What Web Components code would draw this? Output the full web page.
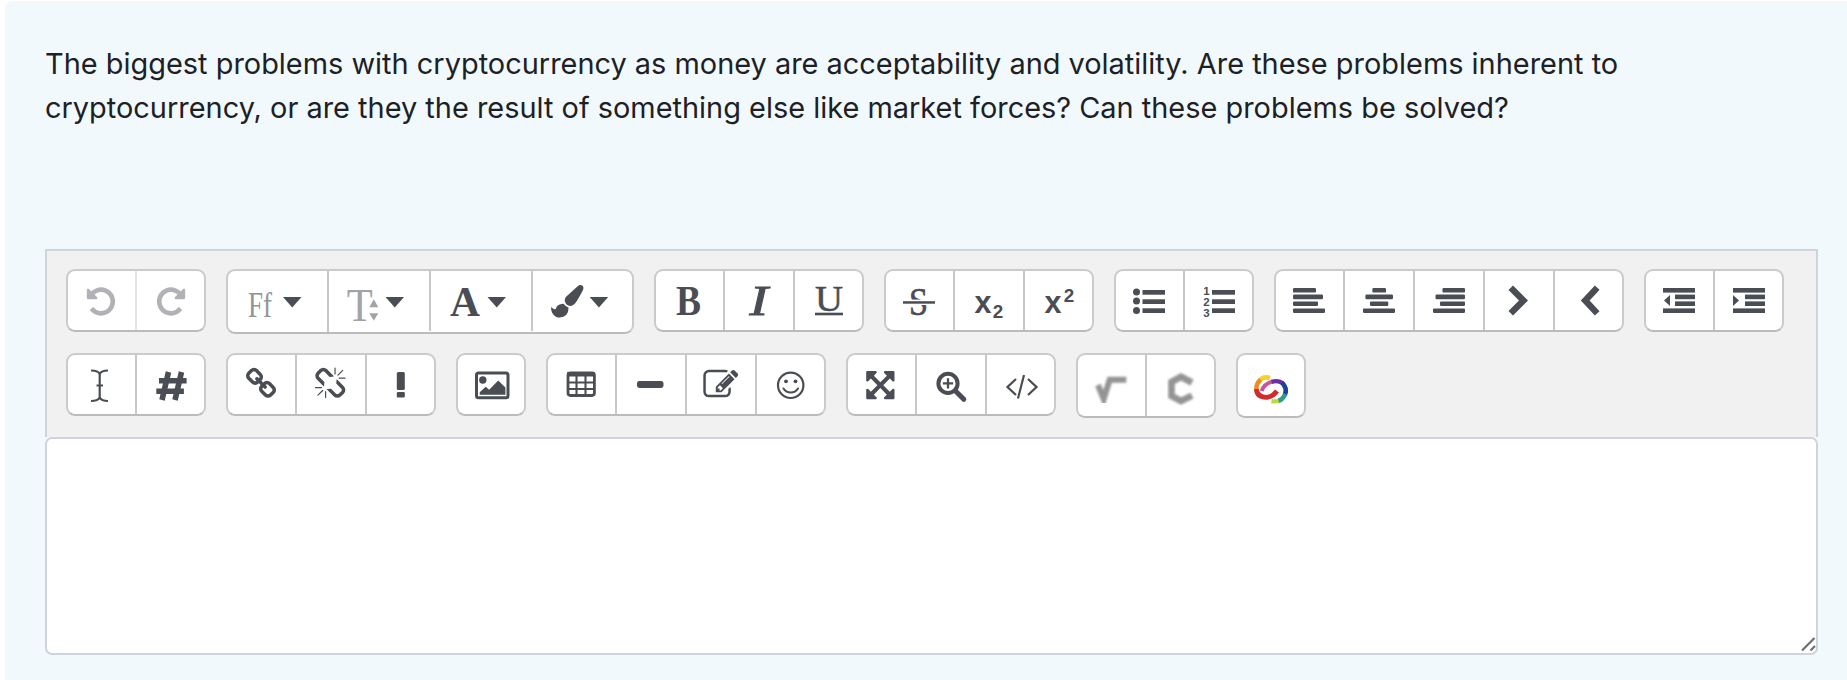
<!DOCTYPE html>
<html>
  <head>
    <meta charset="UTF-8" />
    <title>Question</title>
    <style>
      html, body { margin: 0; background: #fff; }
    </style>
  </head>

  <body>
    <question-panel>
      The biggest problems with cryptocurrency as money are acceptability and volatility. Are these problems inherent to
      cryptocurrency, or are they the result of something else like market forces? Can these problems be solved?
      <atto-editor slot="editor">
        <atto-group><atto-btn icon="undo"></atto-btn><atto-btn icon="redo"></atto-btn></atto-group>
        <atto-group wide><atto-btn icon="font" wide></atto-btn><atto-btn icon="size" wide></atto-btn><atto-btn icon="color" wide></atto-btn><atto-btn icon="brush" wide></atto-btn></atto-group>
        <atto-group><atto-btn icon="bold"></atto-btn><atto-btn icon="italic"></atto-btn><atto-btn icon="underline"></atto-btn></atto-group>
        <atto-group><atto-btn icon="strike"></atto-btn><atto-btn icon="sub"></atto-btn><atto-btn icon="sup"></atto-btn></atto-group>
        <atto-group><atto-btn icon="ul"></atto-btn><atto-btn icon="ol"></atto-btn></atto-group>
        <atto-group><atto-btn icon="alignl"></atto-btn><atto-btn icon="alignc"></atto-btn><atto-btn icon="alignr"></atto-btn><atto-btn icon="chevr"></atto-btn><atto-btn icon="chevl"></atto-btn></atto-group>
        <atto-group><atto-btn icon="outdent"></atto-btn><atto-btn icon="indent"></atto-btn></atto-group>

        <atto-group><atto-btn icon="cursor"></atto-btn><atto-btn icon="hash"></atto-btn></atto-group>
        <atto-group><atto-btn icon="link"></atto-btn><atto-btn icon="unlink"></atto-btn><atto-btn icon="excl"></atto-btn></atto-group>
        <atto-group><atto-btn icon="image"></atto-btn></atto-group>
        <atto-group><atto-btn icon="table"></atto-btn><atto-btn icon="minus"></atto-btn><atto-btn icon="edit"></atto-btn><atto-btn icon="smile"></atto-btn></atto-group>
        <atto-group><atto-btn icon="expand"></atto-btn><atto-btn icon="zoom"></atto-btn><atto-btn icon="code"></atto-btn></atto-group>
        <atto-group tall><atto-btn icon="sqrt"></atto-btn><atto-btn icon="chem"></atto-btn></atto-group>
        <atto-group tall><atto-btn icon="logo"></atto-btn></atto-group>
      </atto-editor>
    </question-panel>

    <script>
      const DARK = "#4a4e54";
      const GREY = "#a2a3a5";
      const SERIF = "'Liberation Serif', serif";
      const SANS = "'Liberation Sans', sans-serif";
      const ROW1 = 271;
      const ROW2 = 355;

      // font awesome style paths, 1792 grid
      const P = {
        undo: "M1664 896q0 156-61 298t-164 245-245 164-298 61q-172 0-327-72.5t-264-204.5q-7-10-6.5-22.5t8.5-20.5l137-138q10-9 25-9 16 2 23 12 73 95 179 147t225 52q104 0 198.5-40.5t163.5-109.5 109.5-163.5 40.5-198.5-40.5-198.5-109.5-163.5-163.5-109.5-198.5-40.5q-98 0-188 35.5t-160 101.5l137 138q31 30 14 69-17 40-59 40h-448q-26 0-45-19t-19-45v-448q0-42 40-59 39-17 69 14l130 129q107-101 244.5-156.5t284.5-55.5q156 0 298 61t245 164 164 245 61 298z",
        link: "M1520 1216q0-40-28-68l-208-208q-28-28-68-28-42 0-72 32 3 3 19 18.5t21.5 21.5 15 19 13 25.5 3.5 27.5q0 40-28 68t-68 28q-15 0-27.5-3.5t-25.5-13-19-15-21.5-21.5-18.5-19q-33 31-33 73 0 40 28 68l206 207q27 27 68 27 40 0 68-26l147-146q28-28 28-67zm-703-705q0-40-28-68l-206-207q-28-28-68-28-39 0-68 27l-147 146q-28 28-28 67 0 40 28 68l208 208q27 27 68 27 42 0 72-31-3-3-19-18.5t-21.5-21.5-15-19-13-25.5-3.5-27.5q0-40 28-68t68-28q15 0 27.5 3.5t25.5 13 19 15 21.5 21.5 18.5 19q33-31 33-73zm895 705q0 120-85 203l-147 146q-83 83-203 83-121 0-204-85l-206-207q-83-83-83-203 0-123 88-209l-88-88q-86 88-208 88-120 0-204-84l-208-208q-84-84-84-204t85-203l147-146q83-83 203-83 121 0 204 85l206 207q83 83 83 203 0 123-88 209l88 88q86-88 208-88 120 0 204 84l208 208q84 84 84 204z",
        unlink: "M439 1271l-256 256q-11 9-23 9t-23-9q-9-10-9-23t9-23l256-256q10-9 23-9t23 9q9 10 9 23t-9 23zm169 41v320q0 14-9 23t-23 9-23-9-9-23v-320q0-14 9-23t23-9 23 9 9 23zm-224-224q0 14-9 23t-23 9h-320q-14 0-23-9t-9-23 9-23 23-9h320q14 0 23 9t9 23zm1264 128q0 120-85 203l-147 146q-83 83-203 83-121 0-204-85l-334-335q-21-21-42-56l239-18 273 274q27 27 68 27.5t68-26.5l147-146q28-28 28-67 0-40-28-68l-274-275 18-239q35 21 56 42l336 336q84 86 84 204zm-617-724l-239 18-273-274q-28-28-68-28-39 0-68 27l-147 146q-28 28-28 67 0 40 28 68l274 274-18 240q-35-21-56-42l-336-336q-84-86-84-204 0-120 85-203l147-146q83-83 203-83 121 0 204 85l334 335q21 21 42 56zm633 84q0 14-9 23t-23 9h-320q-14 0-23-9t-9-23 9-23 23-9h320q14 0 23 9t9 23zm-544-544v320q0 14-9 23t-23 9-23-9-9-23v-320q0-14 9-23t23-9 23 9 9 23zm407 151l-256 256q-11 9-23 9t-23-9q-9-10-9-23t9-23l256-256q10-9 23-9t23 9q9 10 9 23t-9 23z",
        brush: "M1615 0q70 0 122.5 46.5t52.5 116.5q0 63-45 151-332 629-465 752-97 91-218 91-126 0-216.5-92.5t-90.5-219.5q0-128 92-212l638-579q59-54 130-54zm-909 1034q39 76 106.5 130t150.5 76l1 71q4 213-129.5 347t-348.5 134q-123 0-218-46.5t-152.5-127.5-86.5-183-29-220q7 5 41 30t62 44.5 59 36.5 46 17q41 0 55-37 25-66 57.5-112.5t69.5-76 88-47.5 103-25.5 125-10.5z",
        edit: "M888 1184l116-116-152-152-116 116v56h96v96h56zm440-720q-16-16-33 1l-350 350q-17 17-1 33t33-1l350-350q17-17 1-33zm80 594v190q0 119-84.5 203.5t-203.5 84.5h-832q-119 0-203.5-84.5t-84.5-203.5v-832q0-119 84.5-203.5t203.5-84.5h832q63 0 117 25 15 7 18 23 3 17-9 29l-49 49q-14 14-32 8-23-6-45-6h-832q-66 0-113 47t-47 113v832q0 66 47 113t113 47h832q66 0 113-47t47-113v-126q0-13 9-22l64-64q15-15 35-7t20 29zm-96-738l288 288-672 672h-288v-288zm444 132l-92 92-288-288 92-92q28-28 68-28t68 28l152 152q28 28 28 68t-28 68z",
        expand: "M1283 413l-355 355 355 355 144-144q29-31 70-14 39 17 39 59v448q0 26-19 45t-45 19h-448q-42 0-59-40-17-39 14-69l144-144-355-355-355 355 144 144q31 30 14 69-17 40-59 40h-448q-26 0-45-19t-19-45v-448q0-42 40-59 39-17 69 14l144 144 355-355-355-355-144 144q-19 19-45 19-12 0-24-5-40-17-40-59v-448q0-26 19-45t45-19h448q42 0 59 40 17 39-14 69l-144 144 355 355 355-355-144-144q-31-30-14-69 17-40 59-40h448q26 0 45 19t19 45v448q0 42-39 59-13 5-25 5-26 0-45-19z",
      };

      const fa = (x, y, s, d, fill, flip) =>
        `<svg x="${x}" y="${y}" width="${s}" height="${s}" viewBox="0 0 1792 1792"><path fill="${fill}" ${flip ? 'transform="translate(1792,0) scale(-1,1)"' : ""} d="${d}"/></svg>`;
      const caret = (x) => `<path fill="${DARK}" d="M${x} 297h18.5l-9.25 10.5z"/>`;
      const txt = (x, y, size, s, o = {}) =>
        `<text x="${x}" y="${y}" font-size="${size}" font-family="${o.family || SERIF}" font-weight="${o.weight || 400}" font-style="${o.style || "normal"}" fill="${o.fill || DARK}" ${o.stroke ? `stroke="${o.fill || DARK}" stroke-width="${o.stroke}"` : ""} ${o.len ? `textLength="${o.len}" lengthAdjust="spacingAndGlyphs"` : ""}>${s}</text>`;
      const bar = (x, y, w, h = 4.6, r = 1.2) => `<rect x="${x}" y="${y}" width="${w}" height="${h}" rx="${r}" fill="${DARK}"/>`;
      const line = (d, w, c = DARK, cap = "butt") => `<path fill="none" stroke="${c}" stroke-width="${w}" stroke-linecap="${cap}" stroke-linejoin="miter" d="${d}"/>`;
      const rows = [288, 294.6, 301.4, 308.4];

      const ICONS = {
        undo: [68, ROW1, fa(84.5, 285, 33, P.undo, "#b1b2b6")],
        redo: [137, ROW1, fa(154.5, 285, 33, P.undo, "#b1b2b6", true)],
        font: [228, ROW1, txt(248, 316.7, 36, "Ff", { fill: "#939496", len: 24 }) + caret(283)],
        size: [329, ROW1, txt(346.7, 321, 46, "T", { fill: GREY, len: 26 }) + `<path fill="${GREY}" d="M373.8 299.3l4.5 8h-9zM369.3 313.3h9l-4.5 7.5z"/>` + caret(385.5)],
        color: [431, ROW1, txt(450, 315.7, 42, "A", { weight: 700, len: 30 }) + caret(487.5)],
        brush: [533, ROW1, fa(551, 285, 32.5, P.brush, DARK) + caret(589.7)],
        bold: [656, ROW1, txt(676, 315, 42, "B", { weight: 700, len: 25 })],
        italic: [725, ROW1, txt(749.5, 315, 42, "I", { style: "italic", stroke: 0.9, len: 18.5 })],
        underline: [795, ROW1, txt(815, 311, 35, "U", { stroke: 0.5, len: 28 }) + bar(815, 312.7, 28, 2.6, 0)],
        strike: [886, ROW1, txt(909, 315, 39, "S", { stroke: 0.7, len: 19 }) + `<rect x="903" y="299.6" width="32" height="5.4" fill="#fff"/>` + bar(903, 301.2, 32, 2.5, 0)],
        sub: [955, ROW1, txt(974.5, 312.7, 32, "x", { family: SANS, weight: 700, len: 17 }) + txt(992.7, 318, 18.5, "2", { family: SANS, weight: 700, len: 10.5 })],
        sup: [1025, ROW1, txt(1044.5, 312.5, 32, "x", { family: SANS, weight: 700, len: 17 }) + txt(1063.7, 301.7, 18.5, "2", { family: SANS, weight: 700, len: 10.5 })],
        ul: [1116, ROW1, `<g fill="${DARK}"><circle cx="1136.5" cy="292" r="3.5"/><circle cx="1136.5" cy="301" r="3.5"/><circle cx="1136.5" cy="310.5" r="3.5"/></g>` + bar(1142.5, 290, 22.5, 4.7, 0) + bar(1142.5, 299.3, 22.5, 4.7, 0) + bar(1142.5, 308.3, 22.5, 4.7, 0)],
        ol: [1185, ROW1, txt(1203.3, 295, 11.5, "1", { family: SANS, weight: 700 }) + txt(1203.3, 305.5, 11.5, "2", { family: SANS, weight: 700 }) + txt(1203.3, 317, 11.5, "3", { family: SANS, weight: 700 }) + bar(1212, 290, 23, 4.7, 0) + bar(1212, 299.3, 23, 4.7, 0) + bar(1212, 308.3, 23, 4.7, 0)],
        alignl: [1276, ROW1, bar(1293, rows[0], 23) + bar(1293, rows[1], 30) + bar(1293, rows[2], 25) + bar(1293, rows[3], 32)],
        alignc: [1345, ROW1, bar(1372.4, rows[0], 13.6) + bar(1365.4, rows[1], 27.6) + bar(1370, rows[2], 18.3) + bar(1363, rows[3], 32)],
        alignr: [1415, ROW1, bar(1442.5, rows[0], 22.5) + bar(1435.5, rows[1], 29.5) + bar(1440, rows[2], 25) + bar(1433, rows[3], 32)],
        chevr: [1485, ROW1, line("M1513 290L1523.5 300.5L1513 311", 6.4, DARK, "square")],
        chevl: [1555, ROW1, line("M1595 290L1585.2 300.5L1595 311", 6.4, DARK, "square")],
        outdent: [1646, ROW1, bar(1663, 288, 32, 4.6, 0) + bar(1675, 294.6, 20, 4.6, 0) + bar(1675, 301.4, 20, 4.6, 0) + bar(1663, 308.4, 32, 4.6, 0) + `<path fill="${DARK}" d="M1670 295v11l-6-5.5z"/>`],
        indent: [1715, ROW1, bar(1733, 288, 32, 4.6, 0) + bar(1745, 294.6, 20, 4.6, 0) + bar(1745, 301.4, 20, 4.6, 0) + bar(1733, 308.4, 32, 4.6, 0) + `<path fill="${DARK}" d="M1733 295v11l6-5.5z"/>`],
        cursor: [68, ROW2, line("M91 370.5c5 0 7.5 1 8.7 3.5c1.2-2.5 3.7-3.5 8.3-3.5M91 401c5 0 7.5-1 8.7-3.5c1.2 2.5 3.7 3.5 8.3 3.5M99.7 374v23.5M96.5 385.5h6.5", 2.2)],
        hash: [137, ROW2, line("M168.5 372L162 400M181.5 372L175 400", 5.6) + line("M159 380.7H186.6M156.3 391.3H183.9", 5.4)],
        link: [228, ROW2, fa(244.5, 367.5, 33, P.link, DARK)],
        unlink: [297, ROW2, fa(315, 367.5, 33, P.unlink, DARK)],
        excl: [367, ROW2, `<rect x="396.8" y="372" width="8" height="18" rx="1.5" fill="${DARK}"/><rect x="396.8" y="392" width="8" height="5.4" rx="1.2" fill="${DARK}"/>`],
        image: [458, ROW2, `<rect x="476.5" y="373" width="31.5" height="24.8" rx="2" fill="none" stroke="${DARK}" stroke-width="3"/><circle cx="482.8" cy="380" r="3.7" fill="${DARK}"/><path fill="${DARK}" d="M479.7 394.7v-2.5l6-5.4 3.5 3 9-9.3 7.2 7v7.2z"/>`],
        table: [548, ROW2, `<rect x="568" y="373" width="26.4" height="22.5" rx="2.4" fill="none" stroke="${DARK}" stroke-width="2.8"/>` + bar(567, 372, 28, 4.5, 1) + line("M576.5 375v20M585.5 375v20M568 382.5h26M568 389h26", 2.1)],
        minus: [617, ROW2, `<rect x="637" y="381" width="26.5" height="7" rx="2.4" fill="${DARK}"/>`],
        edit: [687, ROW2, fa(703.3, 367.3, 35, P.edit, DARK)],
        smile: [757, ROW2, `<circle cx="790.7" cy="385.3" r="12.7" fill="none" stroke="${DARK}" stroke-width="2.2"/><circle cx="786" cy="381.3" r="1.9" fill="${DARK}"/><circle cx="795.5" cy="381.3" r="1.9" fill="${DARK}"/>` + line("M783.5 388.5c3.5 5.4 11 5.4 14.5 0", 2.1, DARK, "round")],
        expand: [848, ROW2, fa(866.2, 371, 33, P.expand, DARK)],
        zoom: [917, ROW2, `<circle cx="948" cy="383.4" r="9.6" fill="none" stroke="${DARK}" stroke-width="4"/>` + line("M948 378.3v10.2M942.9 383.4h10.2", 2.3) + line("M955.5 391l8.3 8.3", 5, DARK, "round")],
        code: [987, ROW2, line("M1016 379l-8.5 8l8.5 8M1028 379l8.5 8l-8.5 8", 2.3) + line("M1024 375L1018 398.5", 2.2)],
        sqrt: [1078, ROW2, `<g filter="url(#soft)">` + line("M1098 385L1103.7 399L1109.7 379.7H1126.3", 6, "#949494") + `</g><filter id="soft" x="-20%" y="-20%" width="140%" height="140%"><feGaussianBlur stdDeviation="0.9"/></filter>`],
        chem: [1147, ROW2, `<g filter="url(#soft2)">` + line("M1192 382.5L1181 376.8L1171.5 382V396L1181 401L1192 395.6", 6.6, "#949494") + `</g><filter id="soft2" x="-20%" y="-20%" width="140%" height="140%"><feGaussianBlur stdDeviation="0.9"/></filter>`],
        logo: [1238, ROW2,
          `<g transform="translate(-1,0)" filter="url(#soft3)">` +
          line("M1271 378Q1265 376 1261 380", 4.6, "#f4d22c") +
          line("M1261.5 379.6Q1257 384 1257.3 389.5", 4.6, "#ee8b20") +
          line("M1257.3 389Q1258 397.5 1268 397.3Q1274 396.5 1278 391", 4.8, "#d32a2c") +
          line("M1262.7 391Q1265 384 1273 381.7", 4, "#c4579c") +
          line("M1272.5 381.8Q1279 380 1283.5 383", 4.4, "#6b2f9e") +
          line("M1283 382.6Q1288.5 388 1286 394.5", 4.6, "#1f3fa0") +
          line("M1286.3 394Q1283.5 400 1279 401", 4.6, "#2d9d8a") +
          line("M1279.5 400.8Q1276 402 1272.5 401", 4.2, "#bcdc3e") +
          `</g><filter id="soft3" x="-20%" y="-20%" width="140%" height="140%"><feGaussianBlur stdDeviation="0.35"/></filter>`],
      };

      class QuestionPanel extends HTMLElement {
        constructor() {
          super();
          this.attachShadow({ mode: "open" }).innerHTML = `
            <style>
              :host {
                display: block;
                box-sizing: border-box;
                margin: 1px 0 0 5px;
                height: 679px;
                padding: 41px 29px 0 40px;
                background: #f1f9fc;
                border-radius: 7px 0 0 0;
                overflow: hidden;
                font-family: Inter, "Noto Sans", sans-serif;
                font-size: 28.93px;
                line-height: 44px;
                color: #1d2125;
              }
              .text { margin-bottom: 119px; }
            </style>
            <div class="text"><slot></slot></div>
            <slot name="editor"></slot>
          `;
        }
      }

      class AttoEditor extends HTMLElement {
        constructor() {
          super();
          this.attachShadow({ mode: "open" }).innerHTML = `
            <style>
              :host { display: block; }
              .toolbar {
                display: flex;
                flex-wrap: wrap;
                align-items: flex-start;
                align-content: flex-start;
                column-gap: 20px;
                row-gap: 19px;
                height: 168px;
                padding: 18px 19px 0 19px;
                background: #f1f1f1;
                border: 2px solid #ced4da;
                border-bottom: 0;
                box-sizing: content-box;
              }
              .content {
                position: relative;
                box-sizing: border-box;
                height: 218px;
                background: #fff;
                border: 2px solid #ced4da;
                border-radius: 7px;
              }
              .grip { position: absolute; right: 0; bottom: 1px; display: block; }
            </style>
            <div class="toolbar"><slot></slot></div>
            <div class="content">
              <svg class="grip" width="16" height="16" viewBox="0 0 16 16">
                <path d="M2 14.5L14.5 2M10.5 14.5L15 10" stroke="#6f6f6f" stroke-width="2.2" fill="none"/>
              </svg>
            </div>
          `;
        }
      }

      class AttoGroup extends HTMLElement {
        constructor() {
          super();
          this.attachShadow({ mode: "open" }).innerHTML = `
            <style>
              :host {
                display: flex;
                flex: none;
                box-sizing: border-box;
                height: 63px;
                background: #fff;
                border: 2px solid #cbcbcb;
                border-bottom-color: #bbb;
                border-radius: 9px;
                overflow: hidden;
              }
              :host([wide]), :host([tall]) { height: 65px; }
            </style>
            <slot></slot>
          `;
        }
      }

      class AttoBtn extends HTMLElement {
        constructor() {
          super();
          this.attachShadow({ mode: "open" });
        }

        connectedCallback() {
          const [x, y, body] = ICONS[this.getAttribute("icon")];
          this.shadowRoot.innerHTML = `
            <style>
              :host {
                --w: 67px;
                display: block;
                box-sizing: border-box;
                width: calc(var(--w) + 3px);
                border-left: 2px solid #c8c8c8;
              }
              :host([wide]) { --w: 99px; }
              :host(:first-child) { width: var(--w); border-left: 0; }
              :host(:last-child) { width: calc(var(--w) + 2px); }
              :host(:only-child) { width: 66px; }
              :host([icon="redo"]) { border-left-color: #e4e4e4; }
              :host([icon="color"]), :host([icon="brush"]) { height: 60px; align-self: flex-start; }
              svg { display: block; overflow: visible; }
            </style>
            <svg width="70" height="59" viewBox="${x} ${y} 70 59">${body}</svg>
          `;
        }
      }

      customElements.define("question-panel", QuestionPanel);
      customElements.define("atto-editor", AttoEditor);
      customElements.define("atto-group", AttoGroup);
      customElements.define("atto-btn", AttoBtn);
    </script>
  </body>
</html>
